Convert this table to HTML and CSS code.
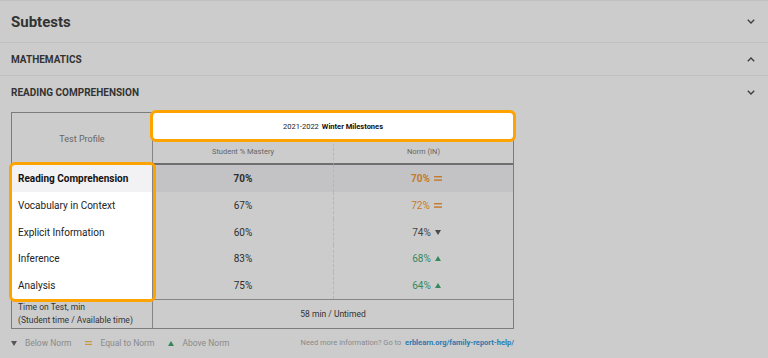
FILE: index.html
```html
<!DOCTYPE html>
<html lang="en">
<head>
<meta charset="utf-8">
<title>Subtests</title>
<link rel="stylesheet" href="styles.css">
</head>
<body>
<div class="page">
  <div class="title-row">
    <h2 class="title">Subtests</h2>
    <svg class="chev" width="8" height="5" viewBox="0 0 8 5"><polyline points="0.8,0.8 4,4 7.2,0.8"/></svg>
  </div>
  <div class="acc-row">
    <span class="acc-label">MATHEMATICS</span>
    <svg class="chev" width="8" height="5" viewBox="0 0 8 5"><polyline points="0.8,4.2 4,1 7.2,4.2"/></svg>
  </div>
  <div class="acc-row last">
    <span class="acc-label">READING COMPREHENSION</span>
    <svg class="chev" width="8" height="5" viewBox="0 0 8 5"><polyline points="0.8,0.8 4,4 7.2,0.8"/></svg>
  </div>

  <div class="content">
    <div class="grid">
      <div class="cell profile-head">Test Profile</div>
      <div class="cell test-head spot">2021-2022 <b>Winter Milestones</b></div>
      <div class="cell sub-head c2 dashed">Student % Mastery</div>
      <div class="cell sub-head c3">Norm (IN)</div>

      <div class="cell label r3 first"><b>Reading Comprehension</b></div>
      <div class="cell val c2 r3 dashed shade"><b>70%</b></div>
      <div class="cell val c3 r3 shade"><span class="norm eq"><b>70%</b><svg width="8" height="5" viewBox="0 0 8 5"><rect x="0" y="0" width="8" height="1.4"/><rect x="0" y="3.4" width="8" height="1.4"/></svg></span></div>

      <div class="cell label r4">Vocabulary in Context</div>
      <div class="cell val c2 r4 dashed">67%</div>
      <div class="cell val c3 r4"><span class="norm eq">72%<svg width="8" height="5" viewBox="0 0 8 5"><rect x="0" y="0" width="8" height="1.4"/><rect x="0" y="3.4" width="8" height="1.4"/></svg></span></div>

      <div class="cell label r5">Explicit Information</div>
      <div class="cell val c2 r5 dashed">60%</div>
      <div class="cell val c3 r5"><span class="norm below">74%<svg width="6" height="5" viewBox="0 0 6 5"><polygon points="0,0 6,0 3,5"/></svg></span></div>

      <div class="cell label r6">Inference</div>
      <div class="cell val c2 r6 dashed">83%</div>
      <div class="cell val c3 r6"><span class="norm above">68%<svg width="6" height="5" viewBox="0 0 6 5"><polygon points="0,5 6,5 3,0"/></svg></span></div>

      <div class="cell label r7">Analysis</div>
      <div class="cell val c2 r7 dashed">75%</div>
      <div class="cell val c3 r7"><span class="norm above">64%<svg width="6" height="5" viewBox="0 0 6 5"><polygon points="0,5 6,5 3,0"/></svg></span></div>

      <div class="cell time-label">Time on Test, min<br>(Student time / Available time)</div>
      <div class="cell time-val">58 min / Untimed</div>

      <div class="label-spot"></div>
    </div>

    <div class="legend">
      <div class="legend-left">
        <span class="leg-item"><svg width="6" height="5" viewBox="0 0 6 5" class="ic-below"><polygon points="0,0 6,0 3,5"/></svg>Below Norm</span>
        <span class="leg-item"><svg width="7" height="4" viewBox="0 0 7 4" class="ic-eq"><rect x="0" y="0" width="7" height="1.2"/><rect x="0" y="2.8" width="7" height="1.2"/></svg>Equal to Norm</span>
        <span class="leg-item"><svg width="6" height="5" viewBox="0 0 6 5" class="ic-above"><polygon points="0,5 6,5 3,0"/></svg>Above Norm</span>
      </div>
      <div class="legend-right">Need more information? Go to <span class="link">erblearn.org/family-report-help/</span></div>
    </div>
  </div>
</div>
</body>
</html>
```

FILE: styles.css
```css
* { box-sizing: border-box; }

body {
  margin: 0;
  background: #cccccc;
  font-family: Roboto, "Liberation Sans", Arial, sans-serif;
  color: #333;
}

.page {
  border-top: 1px solid #c1c1c1;
}

.title-row {
  height: 42px;
  display: flex;
  align-items: center;
  justify-content: space-between;
  padding: 0 13px 0 11px;
  border-bottom: 1px solid #c1c1c1;
}

.title {
  margin: 0;
  font-size: 15px;
  font-weight: 700;
  color: #333;
}

.chev {
  display: block;
  fill: none;
  stroke: #3c3c3c;
  stroke-width: 1.3;
}

.acc-row {
  height: 33px;
  display: flex;
  align-items: center;
  justify-content: space-between;
  padding: 0 13px 0 11px;
  border-bottom: 1px solid #c1c1c1;
}

.acc-row.last {
  border-bottom: none;
  height: 32px;
}

.acc-label {
  font-size: 10px;
  font-weight: 700;
  color: #333;
}

.content {
  padding: 4px 0 0 11px;
}

.grid {
  width: 503px;
  border: 1px solid #7c7c7c;
  display: grid;
  grid-template-columns: 141px 181px 179px;
  grid-template-rows: 26px 26px 27px 27px 26px 27px 27px 29px;
}

.c2 { grid-column: 2; }
.c3 { grid-column: 3; }
.r3 { grid-row: 3; }
.r4 { grid-row: 4; }
.r5 { grid-row: 5; }
.r6 { grid-row: 6; }
.r7 { grid-row: 7; }

.cell {
  display: flex;
  align-items: center;
  justify-content: center;
  font-size: 10px;
  color: #2e2e2e;
}

.profile-head {
  grid-column: 1;
  grid-row: 1 / 3;
  border-right: 1px solid #858585;
  font-size: 9px;
  color: #666;
}

.test-head {
  grid-column: 2 / 4;
  grid-row: 1;
  background: #fff;
  font-size: 7.5px;
  color: #222;
}

.test-head b { margin-left: 3px; color: #111; }

.spot {
  outline: 3px solid #ffa300;
  border-radius: 3px;
  position: relative;
  z-index: 1;
}

.sub-head {
  grid-row: 2;
  font-size: 7.5px;
  color: #666;
  border-bottom: 2px solid #6e6e6e;
}

.dashed {
  border-right: 1px dashed #b6b6b6;
}

.label {
  grid-column: 1;
  justify-content: flex-start;
  padding-left: 6px;
  background: #ffffff;
  color: #222;
  border-right: 1px solid #858585;
}

.label.first {
  background: #f2f2f4;
}

.label b { color: #111; }

.shade {
  background: #c3c3c6;
}

.val b { font-weight: 700; }

.norm {
  display: inline-flex;
  align-items: center;
  gap: 4px;
  margin-left: 6px;
}

.norm.eq { color: #c47a2c; }
.norm.eq svg { fill: #c47a2c; }
.norm.below { color: #444; }
.norm.below svg { fill: #4a4a4a; }
.norm.above { color: #37885a; }
.norm.above svg { fill: #37885a; }

.time-label {
  grid-column: 1;
  grid-row: 8;
  justify-content: flex-start;
  padding-left: 6px;
  font-size: 8.5px;
  line-height: 13px;
  color: #333;
  border-top: 1px solid #858585;
  border-right: 1px solid #858585;
}

.time-val {
  grid-column: 2 / 4;
  grid-row: 8;
  border-top: 1px solid #858585;
  font-size: 8.5px;
  color: #333;
}

.label-spot {
  grid-column: 1;
  grid-row: 3 / 8;
  outline: 3px solid #ffa300;
  outline-offset: 0;
  border-radius: 3px;
  z-index: 2;
  pointer-events: none;
}

.legend {
  width: 503px;
  margin-top: 8px;
  display: flex;
  justify-content: space-between;
  align-items: center;
  line-height: 12px;
  color: #8a8a8a;
}

.legend-left {
  display: flex;
  gap: 14px;
  font-size: 8.5px;
}

.leg-item {
  display: inline-flex;
  align-items: center;
  gap: 8px;
}

.ic-below { fill: #555; }
.ic-eq { fill: #c9963e; }
.ic-above { fill: #37885a; }

.legend-right {
  font-size: 7.5px;
}

.legend-right .link {
  color: #2b7bb1;
  font-weight: 700;
  margin-left: 2px;
}
```
